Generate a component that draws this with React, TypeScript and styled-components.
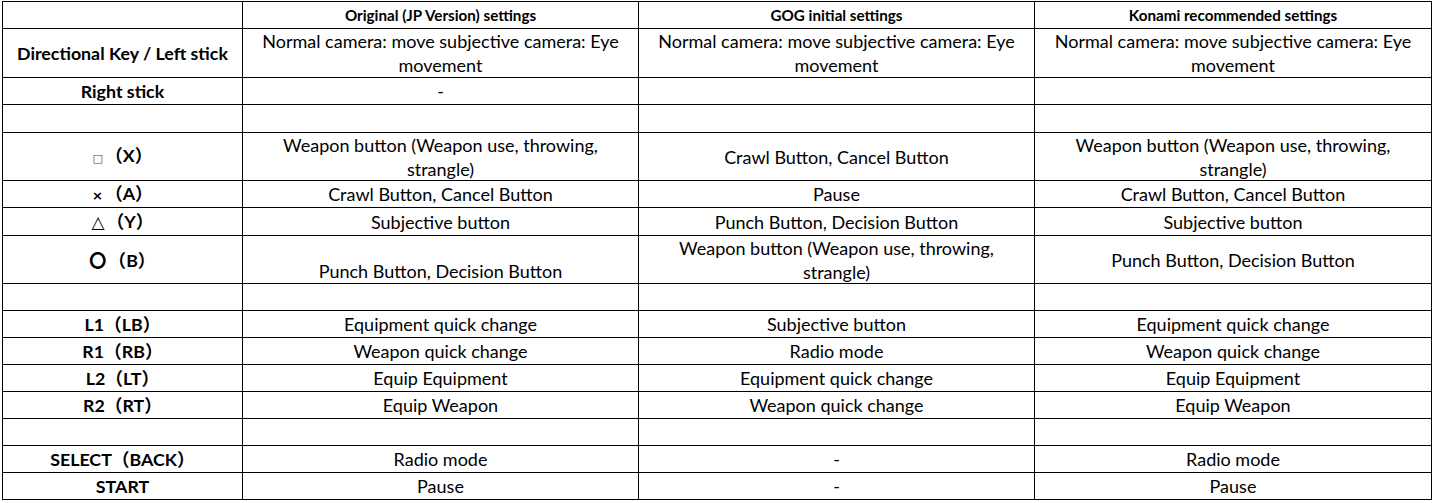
import React from "react";
import styled, { createGlobalStyle } from "styled-components";

const GlobalStyle = createGlobalStyle`
  html, body {
    margin: 0;
    padding: 0;
    background: #fff;
  }
  body {
    font-family: Lato, "Noto Sans CJK JP", sans-serif;
    color: #000;
  }
`;

const Page = styled.div`
  padding: 1px 0 0 2px;
`;

const Sheet = styled.div<{ rows: string }>`
  display: grid;
  grid-template-columns: 239px 395px 395px 396px;
  grid-template-rows: ${props => props.rows};
  gap: 1px;
  padding: 1px;
  width: max-content;
  background: #000;
`;

interface ICell {
  bottom?: boolean;
}

const Cell = styled.div<ICell>`
  background: #fff;
  display: flex;
  flex-direction: column;
  justify-content: ${props => (props.bottom ? "flex-end" : "center")};
  align-items: center;
  text-align: center;
  white-space: pre-line;
  font-size: 18px;
  line-height: 24px;
  padding: 0 6px;
  overflow: hidden;
`;

const HeaderCell = styled(Cell)`
  font-size: 15.2px;
  font-weight: 700;
  line-height: 18px;
`;

const KeyCell = styled(Cell)`
  font-weight: 700;
  font-size: 17.8px;
`;

const Glyph = styled.span<{ size: number; weight?: number; cjk?: boolean }>`
  font-family: ${props => (props.cjk ? `"Noto Sans CJK JP"` : `"DejaVu Sans"`)}, sans-serif;
  font-size: ${props => props.size}px;
  font-weight: ${props => props.weight || 400};
  color: ${props => (props.weight ? "#000" : "#444")};
  margin-right: 2px;
`;

interface IRow {
  key: React.ReactNode;
  height: number;
  values: string[];
  bottomFirst?: boolean;
}

const CAMERA = "Normal camera: move subjective camera: Eye\nmovement";
const WEAPON = "Weapon button (Weapon use, throwing,\nstrangle)";

const rows: IRow[] = [
  { key: "Directional Key / Left stick", height: 48, values: [CAMERA, CAMERA, CAMERA] },
  { key: "Right stick", height: 26, values: ["-", "", ""] },
  { key: "", height: 27, values: ["", "", ""] },
  {
    key: (
      <>
        <Glyph size={11}>□</Glyph>（X）
      </>
    ),
    height: 47,
    values: [WEAPON, "Crawl Button, Cancel Button", WEAPON],
  },
  {
    key: (
      <>
        <Glyph size={13} weight={700}>×</Glyph>（A）
      </>
    ),
    height: 26,
    values: ["Crawl Button, Cancel Button", "Pause", "Crawl Button, Cancel Button"],
  },
  {
    key: (
      <>
        <Glyph size={17} weight={400}>△</Glyph>（Y）
      </>
    ),
    height: 27,
    values: ["Subjective button", "Punch Button, Decision Button", "Subjective button"],
  },
  {
    key: (
      <>
        <Glyph size={17} weight={900} cjk>〇</Glyph>（B）
      </>
    ),
    height: 47,
    values: ["Punch Button, Decision Button", WEAPON, "Punch Button, Decision Button"],
    bottomFirst: true,
  },
  { key: "", height: 26, values: ["", "", ""] },
  { key: "L1（LB）", height: 26, values: ["Equipment quick change", "Subjective button", "Equipment quick change"] },
  { key: "R1（RB）", height: 26, values: ["Weapon quick change", "Radio mode", "Weapon quick change"] },
  { key: "L2（LT）", height: 26, values: ["Equip Equipment", "Equipment quick change", "Equip Equipment"] },
  { key: "R2（RT）", height: 26, values: ["Equip Weapon", "Weapon quick change", "Equip Weapon"] },
  { key: "", height: 26, values: ["", "", ""] },
  { key: "SELECT（BACK）", height: 26, values: ["Radio mode", "-", "Radio mode"] },
  { key: "START", height: 26, values: ["Pause", "-", "Pause"] },
];

const headers = ["Original (JP Version) settings", "GOG initial settings", "Konami recommended settings"];

const App: React.FC = () => {
  const template = ["26px", ...rows.map(r => `${r.height}px`)].join(" ");
  return (
    <>
      <GlobalStyle />
      <Page>
        <Sheet rows={template}>
          <HeaderCell />
          {headers.map(h => (
            <HeaderCell key={h}>{h}</HeaderCell>
          ))}
          {rows.map((row, i) => (
            <React.Fragment key={i}>
              <KeyCell>
                <span>{row.key}</span>
              </KeyCell>
              {row.values.map((v, j) => (
                <Cell key={j} bottom={row.bottomFirst && j === 0}>
                  {v}
                </Cell>
              ))}
            </React.Fragment>
          ))}
        </Sheet>
      </Page>
    </>
  );
};

export default App;
